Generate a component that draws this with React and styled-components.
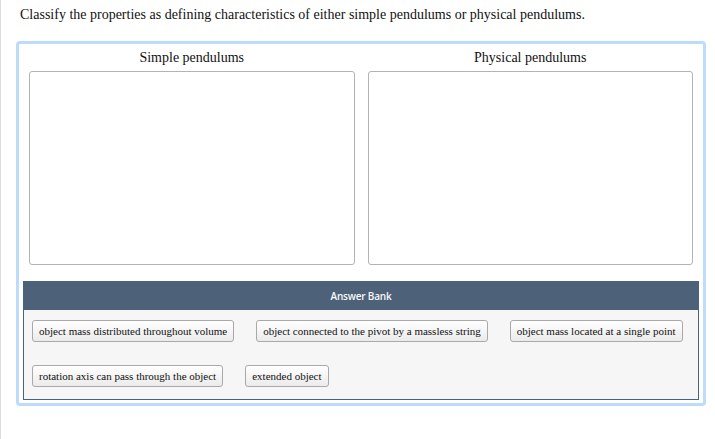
import styled, { createGlobalStyle } from "styled-components";

const GlobalStyle = createGlobalStyle`
  html, body {
    margin: 0;
    padding: 0;
    background: #fff;
  }
  body {
    font-family: "Liberation Serif", "Times New Roman", serif;
    color: #111;
  }
`;

const Page = styled.div`
  min-height: 439px;
  box-sizing: border-box;
  border-left: 1px solid #dcdcdc;
  padding: 6px 0 0 15px;
`;

const Prompt = styled.div`
  font-size: 14px;
  line-height: 18px;
  margin: 0 0 17px 4px;
`;

const Frame = styled.div`
  width: 690px;
  box-sizing: border-box;
  border: 3px solid #bcdcf9;
  border-radius: 4px;
  padding: 0 4px 3px;
`;

const BinRow = styled.div`
  display: flex;
  gap: 13px;
  padding: 0 6px;
`;

const Bin = styled.div`
  flex: 1;
  display: flex;
  flex-direction: column;
`;

const BinTitle = styled.div`
  height: 27px;
  line-height: 27px;
  text-align: center;
  font-size: 14px;
`;

const DropZone = styled.div`
  height: 194px;
  box-sizing: border-box;
  border: 1px solid #b3b3b3;
  border-radius: 3px;
  background: #fff;
`;

const Bank = styled.div`
  margin-top: 16px;
  border: 1px solid #4d6179;
  background: #f6f6f6;
`;

const BankHeader = styled.div`
  height: 28px;
  line-height: 28px;
  background: #4d6179;
  color: #f7f9fc;
  text-align: center;
  font-family: "Open Sans", "Liberation Sans", sans-serif;
  font-size: 10px;
  font-weight: 600;
  letter-spacing: -0.2px;
`;

const ChipArea = styled.div`
  display: flex;
  flex-wrap: wrap;
  gap: 23px 22px;
  padding: 10px 8px 12px;
`;

const Chip = styled.div`
  box-sizing: border-box;
  height: 22px;
  line-height: 20px;
  padding: 0 6px;
  border: 1px solid #a9a9a9;
  border-radius: 3px;
  background: linear-gradient(#ffffff, #ebebeb);
  font-size: 11px;
  white-space: nowrap;
  color: #111;
`;

const bins = ["Simple pendulums", "Physical pendulums"];

const answers = [
  "object mass distributed throughout volume",
  "object connected to the pivot by a massless string",
  "object mass located at a single point",
  "rotation axis can pass through the object",
  "extended object",
];

export default function App() {
  return (
    <>
      <GlobalStyle />
      <Page>
        <Prompt>
          Classify the properties as defining characteristics of either simple pendulums or physical pendulums.
        </Prompt>
        <Frame>
          <BinRow>
            {bins.map((name) => (
              <Bin key={name}>
                <BinTitle>{name}</BinTitle>
                <DropZone />
              </Bin>
            ))}
          </BinRow>
          <Bank>
            <BankHeader>Answer Bank</BankHeader>
            <ChipArea>
              {answers.map((a) => (
                <Chip key={a}>{a}</Chip>
              ))}
            </ChipArea>
          </Bank>
        </Frame>
      </Page>
    </>
  );
}
